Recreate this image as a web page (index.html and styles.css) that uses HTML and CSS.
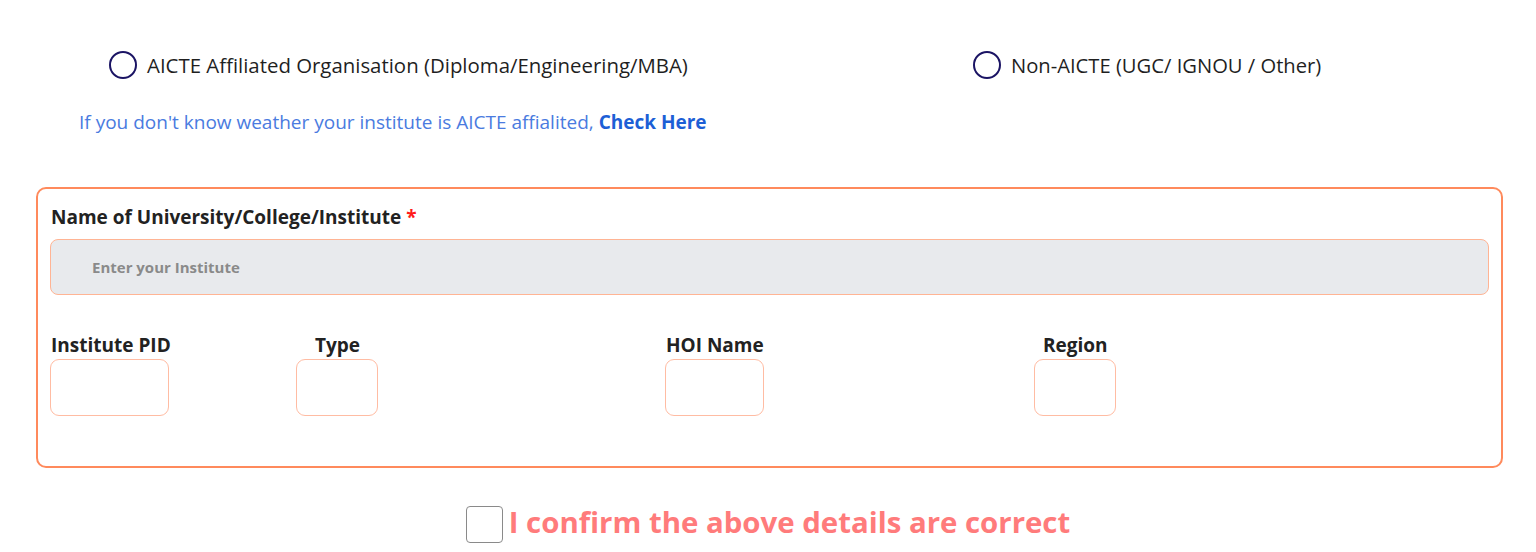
FILE: index.html
```html
<!DOCTYPE html>
<html>
<head>
<meta charset="utf-8">
<link rel="stylesheet" href="styles.css">
</head>
<body>
<div class="page">
  <div class="radio-row">
    <label class="radio"><span class="circle"></span><span>AICTE Affiliated Organisation (Diploma/Engineering/MBA)</span></label>
    <label class="radio"><span class="circle"></span><span>Non-AICTE (UGC/ IGNOU / Other)</span></label>
  </div>
  <p class="hint">If you don't know weather your institute is AICTE affialited, <a class="hint-link">Check Here</a></p>

  <div class="card">
    <div class="field-label">Name of University/College/Institute <span class="req">*</span></div>
    <div class="inst-input">Enter your Institute</div>
    <div class="detail-grid">
      <div class="detail"><div class="detail-label">Institute PID</div><div class="detail-box box-pid"></div></div>
      <div class="detail"><div class="detail-label label-type">Type</div><div class="detail-box box-small"></div></div>
      <div class="detail"><div class="detail-label label-hoi">HOI Name</div><div class="detail-box box-hoi"></div></div>
      <div class="detail"><div class="detail-label label-region">Region</div><div class="detail-box box-small"></div></div>
    </div>
  </div>

  <div class="confirm">
    <span class="check"></span>
    <span class="confirm-text">I confirm the above details are correct</span>
  </div>
</div>
</body>
</html>
```

FILE: styles.css
```css
* { box-sizing: border-box; }
html, body { margin: 0; padding: 0; background: #fff; }
body {
  font-family: "Open Sans", "Noto Sans", "DejaVu Sans", sans-serif;
  color: #212529;
  width: 1536px;
  height: 552px;
  overflow: hidden;
}
.page { padding-top: 51px; }

.radio-row {
  display: grid;
  grid-template-columns: 864px auto;
  padding-left: 109px;
  height: 28px;
  align-items: center;
}
.radio {
  display: flex;
  align-items: center;
  gap: 10px;
  font-size: 20.4px;
  font-weight: 500;
  color: #1f1f1f;
}
.radio:last-child { font-size: 20.2px; }
.circle {
  width: 28px;
  height: 28px;
  border-radius: 50%;
  border: 2.5px solid #1b1464;
  display: inline-block;
  flex: none;
}

.hint {
  margin: 0;
  margin-top: 30px;
  padding-left: 79px;
  font-size: 19px;
  line-height: 26px;
  color: #4a7be0;
}
.hint-link { color: #1d5fd6; font-weight: 700; }

.card {
  margin: 52px 0 0 36px;
  width: 1467px;
  height: 281px;
  border: 2.5px solid #ff8a5c;
  border-radius: 10px;
  padding: 15px 12px 0 12px;
}
.field-label {
  font-size: 19px;
  font-weight: 700;
  line-height: 26px;
  color: #222;
  padding-left: 1px;
}
.req { color: #ff1a1a; }
.inst-input {
  margin-top: 9px;
  height: 56px;
  background: #e8eaed;
  border: 1px solid #ffb494;
  border-radius: 8px;
  padding-left: 41px;
  display: flex;
  align-items: center;
  font-size: 15px;
  font-weight: 700;
  color: #8a8a8a;
}
.detail-grid {
  display: grid;
  grid-template-columns: 246px 369px 369px auto;
  margin-top: 38px;
}
.detail { display: flex; flex-direction: column; align-items: flex-start; }
.detail-label {
  font-size: 19px;
  font-weight: 700;
  line-height: 24px;
  color: #222;
  padding-left: 1px;
}
.label-type { padding-left: 19px; }
.label-hoi { padding-left: 1px; }
.label-region { padding-left: 9px; }
.detail-box {
  margin-top: 2px;
  height: 57px;
  border: 1.5px solid #ffbca3;
  border-radius: 9px;
}
.box-pid { width: 119px; }
.box-small { width: 82px; }
.box-hoi { width: 99px; }

.confirm {
  margin-top: 38px;
  display: flex;
  justify-content: center;
  align-items: center;
  gap: 6px;
}
.check {
  width: 37px;
  height: 37px;
  border: 1.5px solid #8a8a8a;
  border-radius: 4px;
  display: inline-block;
  flex: none;
}
.confirm-text {
  font-size: 29.4px;
  font-weight: 700;
  color: #ff7b7b;
  line-height: 37px;
  position: relative;
  top: -2px;
}
```
